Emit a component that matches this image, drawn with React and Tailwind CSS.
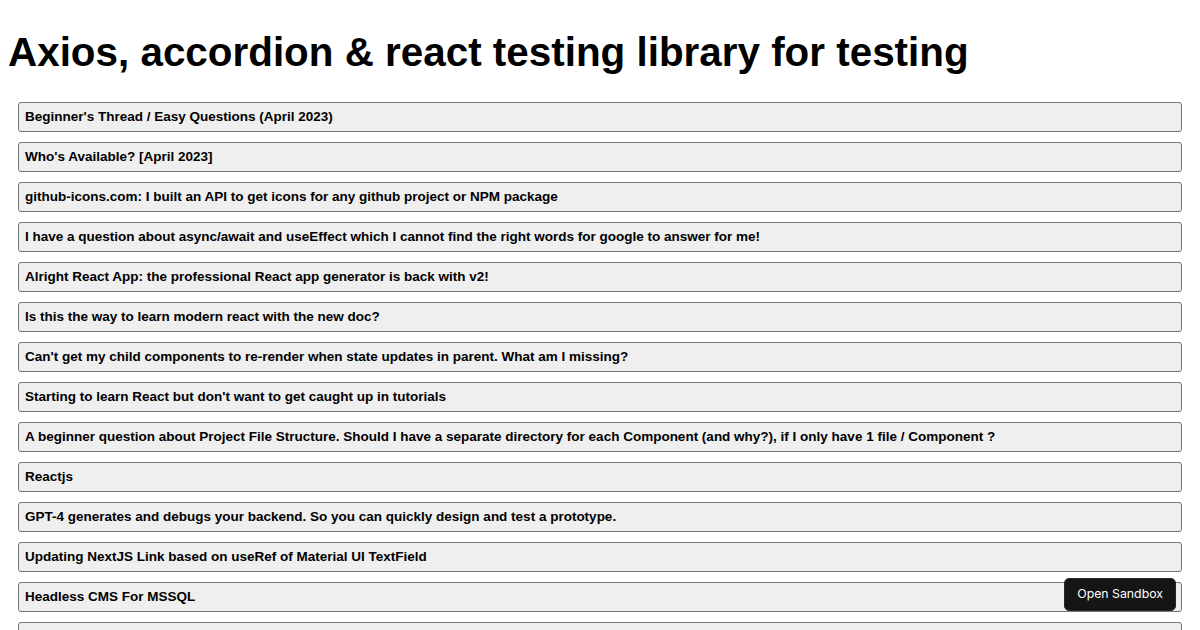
const POSTS = [
  "Beginner's Thread / Easy Questions (April 2023)",
  "Who's Available? [April 2023]",
  "github-icons.com: I built an API to get icons for any github project or NPM package",
  "I have a question about async/await and useEffect which I cannot find the right words for google to answer for me!",
  "Alright React App: the professional React app generator is back with v2!",
  "Is this the way to learn modern react with the new doc?",
  "Can't get my child components to re-render when state updates in parent. What am I missing?",
  "Starting to learn React but don't want to get caught up in tutorials",
  "A beginner question about Project File Structure. Should I have a separate directory for each Component (and why?), if I only have 1 file / Component ?",
  "Reactjs",
  "GPT-4 generates and debugs your backend. So you can quickly design and test a prototype.",
  "Updating NextJS Link based on useRef of Material UI TextField",
  "Headless CMS For MSSQL",
  "How to structure a React project",
];

export default function App() {
  return (
    <div className="p-2 font-['Liberation_Sans',Arial,sans-serif] text-black">
      <h1 className="text-[40.4px] leading-[46px] font-bold mt-[21px] mb-[27px]">
        Axios, accordion &amp; react testing library for testing
      </h1>

      <div className="flex flex-col gap-[10px] mx-[10px]">
        {POSTS.map((title) => (
          <button
            key={title}
            className="w-full h-[30px] text-left px-[6px] pt-[1px] bg-[#efefef] border border-[#767676] rounded-[3px] text-[13.5px] font-bold"
          >
            {title}
          </button>
        ))}
      </div>

      <a className="fixed right-[24px] bottom-[19px] h-[33px] px-[12px] flex items-center bg-[#151515] text-white text-[12.3px] rounded-[5px] border border-[#2a2a2a] font-['Inter',sans-serif]">
        Open Sandbox
      </a>
    </div>
  );
}
